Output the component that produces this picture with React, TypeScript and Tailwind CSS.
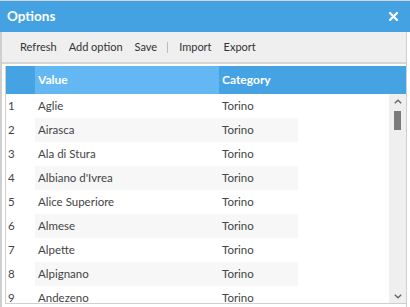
import React from "react";

const rows = [
  "Aglie",
  "Airasca",
  "Ala di Stura",
  "Albiano d'Ivrea",
  "Alice Superiore",
  "Almese",
  "Alpette",
  "Alpignano",
  "Andezeno",
];

export default function App() {
  return (
    <div
      className="w-[410px] h-[307px] bg-white flex flex-col overflow-hidden"
      style={{ fontFamily: "Lato, 'Open Sans', sans-serif" }}
    >
      <div className="h-px bg-[#d4d4d4] shrink-0" />
      <div className="h-[31px] shrink-0 bg-[#44a2e2] flex items-center justify-between pl-[7px] pr-[12px]">
        <span className="text-white font-bold text-[13.5px] leading-none">Options</span>
        <svg width="9" height="9" viewBox="0 0 9 9">
          <path d="M1 1 L8 8 M8 1 L1 8" stroke="white" strokeWidth="2.2" strokeLinecap="square" />
        </svg>
      </div>
      <div className="flex-1 w-[407px] flex flex-col border-l-2 border-r border-[#cfcfcf] pb-[3px] min-h-0">
        <div className="h-[32px] shrink-0 bg-[#efefef] border-b-2 border-[#d6d6d6] flex items-center pl-[18px] text-[11px] text-[#333]">
          <span className="mr-[12px]">Refresh</span>
          <span className="mr-[12px]">Add option</span>
          <span className="mr-[10px]">Save</span>
          <span className="w-px h-[11px] bg-[#bcbcbc] mr-[11px]" />
          <span className="mr-[12px]">Import</span>
          <span>Export</span>
        </div>
        <div className="h-[2px] shrink-0" />
        <div className="flex-1 ml-[3px] flex flex-col border-l border-b border-[#cfcfcf] min-h-0">
          <div className="h-[28px] shrink-0 flex text-white font-bold text-[12px]">
            <div className="w-[29px] bg-[#45a3e4]" />
            <div className="w-[184px] bg-[#63b7f2] flex items-center pl-[3px]">Value</div>
            <div className="flex-1 bg-[#45a3e4] flex items-center pl-[3px]">Category</div>
          </div>
          <div className="flex-1 flex min-h-0">
            <div className="flex-1 overflow-hidden flex flex-col text-[11.5px] text-[#444]">
              {rows.map((r, i) => (
                <div key={r} className="h-[24px] shrink-0 flex items-center">
                  <div className="w-[29px] pl-[2px]">{i + 1}</div>
                  <div
                    className={
                      "w-[184px] h-full flex items-center pl-[3px] " +
                      (i % 2 === 1 ? "bg-[#f7f7f7]" : "")
                    }
                  >
                    {r}
                  </div>
                  <div
                    className={
                      "w-[79px] h-full flex items-center pl-[3px] " +
                      (i % 2 === 1 ? "bg-[#f7f7f7]" : "")
                    }
                  >
                    Torino
                  </div>
                </div>
              ))}
            </div>
            <div className="w-[17px] bg-[#efefef] flex flex-col items-center pt-[5px] pb-[4px]">
              <svg width="8" height="5" viewBox="0 0 8 5">
                <path d="M0.8 4.2 L4 1.2 L7.2 4.2" stroke="#666" strokeWidth="1.4" fill="none" />
              </svg>
              <div className="w-[7px] h-[19px] bg-[#7a7a7a] mt-[7px]" />
              <div className="flex-1" />
              <svg width="8" height="5" viewBox="0 0 8 5">
                <path d="M0.8 0.8 L4 3.8 L7.2 0.8" stroke="#666" strokeWidth="1.4" fill="none" />
              </svg>
            </div>
          </div>
        </div>
      </div>
    </div>
  );
}
